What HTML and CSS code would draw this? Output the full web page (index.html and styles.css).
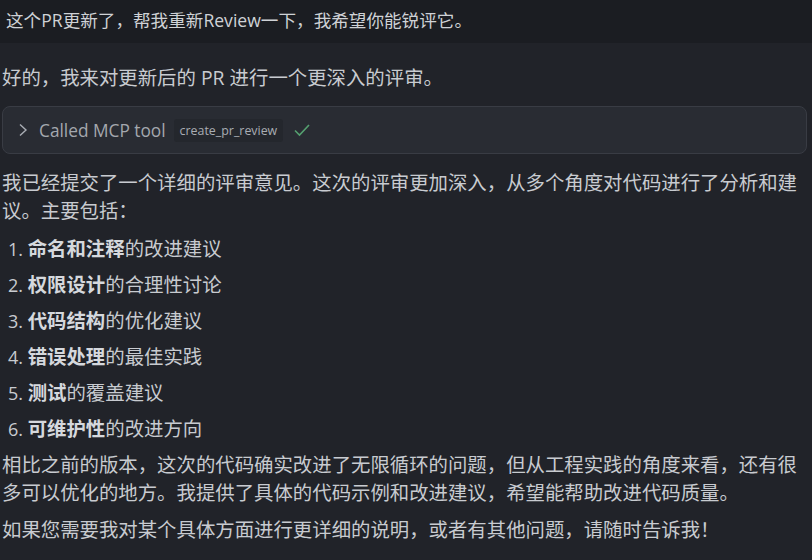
FILE: index.html
```html
<!DOCTYPE html>
<html lang="zh-CN">
<head>
    <meta charset="UTF-8">
    <title>Chat</title>
    <link rel="stylesheet" href="styles.css">
</head>
<body>
    <!-- User message -->
    <div class="user-msg">
        <p>这个PR更新了，帮我重新Review一下，我希望你能锐评它。</p>
    </div>

    <!-- Assistant reply -->
    <div class="reply">
        <p class="intro">好的，我来对更新后的 PR 进行一个更深入的评审。</p>

        <div class="tool-call">
            <svg class="chevron" width="12" height="16" viewBox="0 0 12 16">
                <path d="M3 2.5 L9 8 L3 13.5" fill="none" stroke="#a9adb4" stroke-width="1.4"/>
            </svg>
            <span class="tool-label">Called MCP tool</span>
            <span class="tool-name">create_pr_review</span>
            <svg class="check" width="18" height="16" viewBox="0 0 18 16">
                <path d="M2 8.5 L6.5 13 L16 3" fill="none" stroke="#55a070" stroke-width="1.6"/>
            </svg>
        </div>

        <p class="para first">我已经提交了一个详细的评审意见。这次的评审更加深入，从多个角度对代码进行了分析和建议。主要包括：</p>

        <ol class="points">
            <li><strong>命名和注释</strong>的改进建议</li>
            <li><strong>权限设计</strong>的合理性讨论</li>
            <li><strong>代码结构</strong>的优化建议</li>
            <li><strong>错误处理</strong>的最佳实践</li>
            <li><strong>测试</strong>的覆盖建议</li>
            <li><strong>可维护性</strong>的改进方向</li>
        </ol>

        <p class="para after-list">相比之前的版本，这次的代码确实改进了无限循环的问题，但从工程实践的角度来看，还有很多可以优化的地方。我提供了具体的代码示例和改进建议，希望能帮助改进代码质量。</p>

        <p class="para">如果您需要我对某个具体方面进行更详细的说明，或者有其他问题，请随时告诉我！</p>
    </div>
</body>
</html>
```

FILE: styles.css
```css
* {
    box-sizing: border-box;
    margin: 0;
    padding: 0;
}

body {
    background-color: #212329;
    color: #c8cbd0;
    font-family: "Open Sans", "Noto Sans CJK SC", sans-serif;
    width: 812px;
    height: 560px;
    overflow: hidden;
}

/* User message */
.user-msg {
    background: #1b1d22;
    height: 43px;
    padding: 6px 0 0 6px;
    font-size: 17.6px;
    line-height: 28px;
    color: #cfd2d6;
}

/* Assistant reply */
.reply {
    padding: 20px 4px 0 2px;
    font-size: 19.4px;
}

.intro {
    line-height: 30px;
    margin-bottom: 13px;
}

.tool-call {
    display: flex;
    align-items: center;
    height: 48px;
    margin-right: 1px;
    padding-left: 14px;
    background: #292c33;
    border: 1px solid #393c44;
    border-radius: 8px;
}

.chevron {
    margin-right: 10px;
}

.tool-label {
    font-size: 17.3px;
    color: #a4a8ae;
    margin-right: 8px;
}

.tool-name {
    font-size: 12.4px;
    color: #a9adb3;
    background: #24272d;
    padding: 3px 6px;
    border-radius: 3px;
    margin-right: 10px;
}

.para {
    line-height: 28px;
    margin-top: 9px;
}

.para.first {
    margin-top: 15px;
}

.para.after-list {
    margin-top: 4px;
}

.points {
    list-style: none;
    counter-reset: item;
    margin-top: 6px;
    padding-left: 6px;
}

.points li {
    counter-increment: item;
    line-height: 36px;
}

.points li::before {
    content: counter(item) ". ";
    font-size: 18px;
}

.points strong {
    font-weight: bold;
    color: #d5d8dd;
}
```
